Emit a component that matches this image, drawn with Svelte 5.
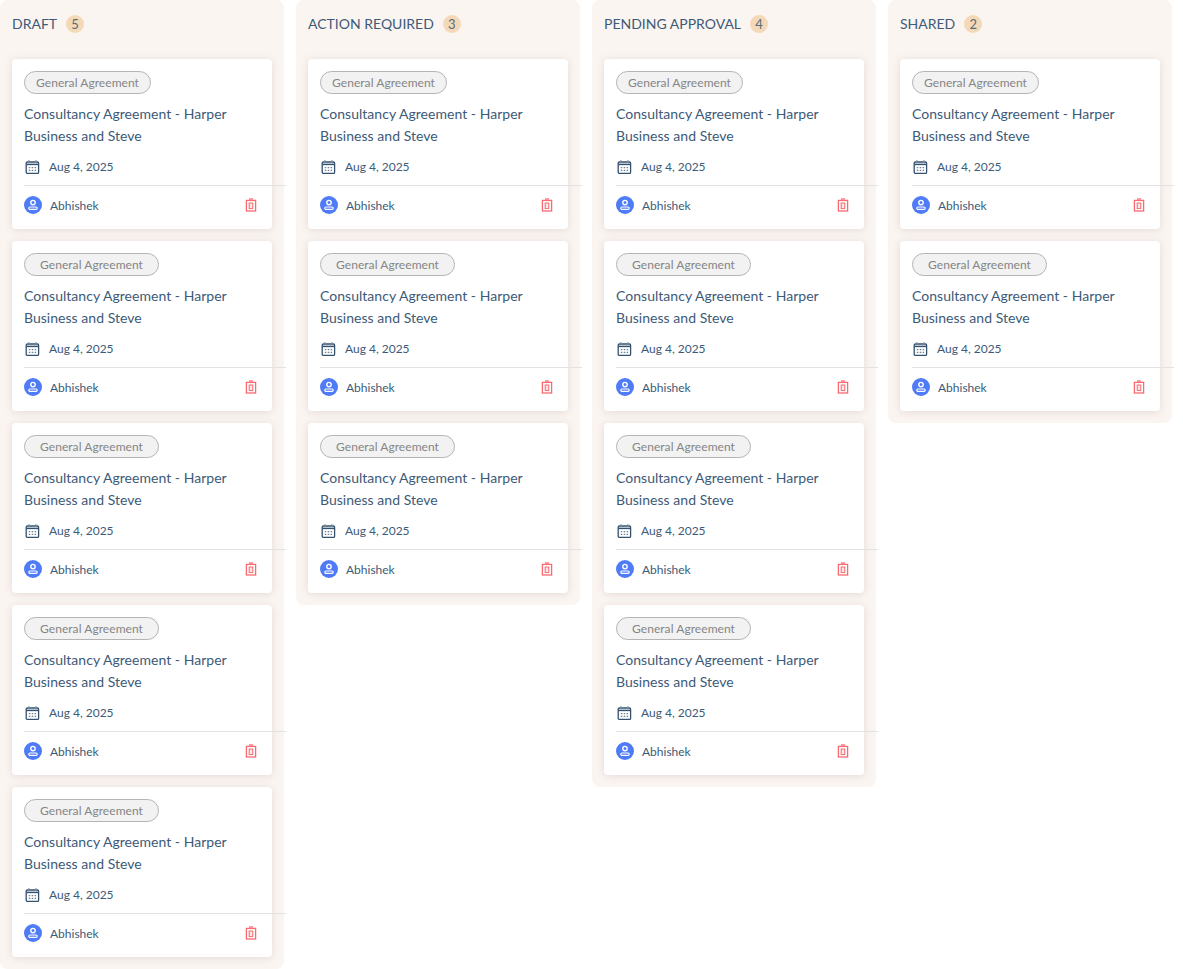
<script>
  const columns = [
    { title: 'DRAFT', count: 5 },
    { title: 'ACTION REQUIRED', count: 3 },
    { title: 'PENDING APPROVAL', count: 4 },
    { title: 'SHARED', count: 2 }
  ];
</script>

<div class="board">
  {#each columns as col}
    <section class="col">
      <header class="head">
        <span class="title">{col.title}</span>
        <span class="badge">{col.count}</span>
      </header>
      <div class="cards">
        {#each Array(col.count) as _, i}
          <article class="card">
            <span class="pill" class:first={i === 0}>General Agreement</span>
            <h3 class="name">Consultancy Agreement - Harper Business and Steve</h3>
            <div class="date">
              <svg width="16" height="16" viewBox="0 0 16 16" fill="none" stroke="#34516e" stroke-width="1.3">
                <rect x="2.2" y="3" width="12.4" height="11.4" rx="1.2" />
                <path d="M2.2 5.4h12.4" stroke-width="1.5" />
                <path d="M4.9 1.2v2M11.9 1.2v2" stroke="#7d8fa3" stroke-width="1.4" />
                <path d="M4.8 8.6h1.5M7.7 8.6h1.5M10.6 8.6h1.5M4.8 11.4h1.5M7.7 11.4h1.5M10.6 11.4h1.5" stroke="#6d8196" stroke-width="1.4" />
              </svg>
              <span>Aug 4, 2025</span>
            </div>
            <div class="rule"></div>
            <div class="foot">
              <span class="user">
                <svg width="18" height="18" viewBox="0 0 18 18">
                  <circle cx="9" cy="9" r="9" fill="#4f7cf6" />
                  <circle cx="9" cy="6.6" r="2.2" fill="none" stroke="#fff" stroke-width="1.4" />
                  <rect x="4.8" y="11" width="8.4" height="2.4" rx="1.2" fill="none" stroke="#fff" stroke-width="1.2" />
                </svg>
                <span>Abhishek</span>
              </span>
              <svg class="trash" width="12" height="14" viewBox="0 0 12 14" fill="none" stroke="#fb6a70" stroke-width="1.3">
                <path d="M4 1h4" />
                <rect x="1.4" y="2.4" width="9.2" height="10.6" />
                <rect x="4.2" y="5" width="3.6" height="5.6" stroke-width="1" fill="#fde4e4" />
              </svg>
            </div>
          </article>
        {/each}
      </div>
    </section>
  {/each}
</div>

<style>
  :global(body) {
    margin: 0;
    background: #fff;
  }
  .board {
    display: flex;
    align-items: flex-start;
    gap: 12px;
    width: 1183px;
    height: 969px;
    overflow: hidden;
    font-family: Lato, "Liberation Sans", sans-serif;
    color: #3d5a78;
  }
  .col {
    flex: 0 0 284px;
    min-width: 0;
    box-sizing: border-box;
    padding: 0 12px 12px;
    background: #fbf5f1;
    border-radius: 8px;
  }
  .head {
    display: flex;
    align-items: center;
    gap: 9px;
    height: 48px;
    margin-bottom: 11px;
  }
  .title {
    font-size: 14px;
    line-height: 20px;
  }
  .badge {
    width: 18px;
    height: 18px;
    border-radius: 50%;
    background: #f4d9b8;
    font-size: 13px;
    line-height: 18px;
    text-align: center;
    color: #5b6b78;
  }
  .cards {
    display: flex;
    flex-direction: column;
    gap: 12px;
  }
  .card {
    box-sizing: border-box;
    width: 260px;
    height: 170px;
    padding: 12px 12px 0;
    background: #fff;
    border-radius: 4px;
    box-shadow: 0 1px 8px rgba(60, 40, 30, 0.13);
  }
  .pill {
    display: block;
    box-sizing: border-box;
    width: 135px;
    height: 23px;
    border: 1px solid #b4b4b4;
    border-radius: 12px;
    background: #f2f2f2;
    color: #858585;
    font-size: 12px;
    letter-spacing: 0.05px;
    line-height: 21px;
    text-align: center;
  }
  .pill.first {
    width: 127px;
  }
  .name {
    margin: 9px 0 0;
    width: 236px;
    font-size: 14px;
    font-weight: 400;
    letter-spacing: 0.03px;
    line-height: 22px;
  }
  .date {
    display: flex;
    align-items: center;
    gap: 9px;
    height: 18px;
    margin-top: 11px;
    font-size: 12px;
    line-height: 18px;
  }
  .rule {
    width: 262px;
    height: 1px;
    margin-top: 9px;
    background: #e2e2e2;
  }
  .foot {
    display: flex;
    align-items: center;
    justify-content: space-between;
    height: 38px;
  }
  .user {
    display: flex;
    align-items: center;
    gap: 8px;
    font-size: 12px;
  }
  .trash {
    margin-right: 3px;
  }
</style>
